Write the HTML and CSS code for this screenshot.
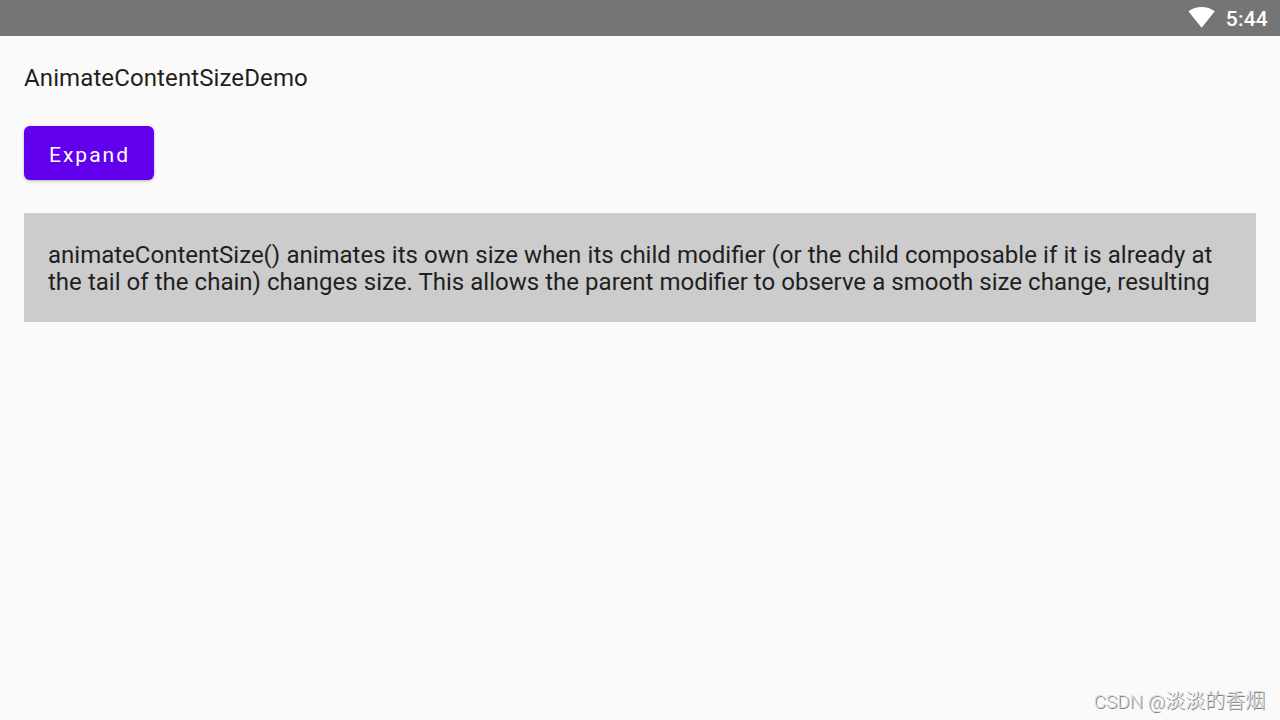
FILE: index.html
```html
<!DOCTYPE html>
<html lang="en">
<head>
  <meta charset="UTF-8">
  <meta name="viewport" content="width=device-width, initial-scale=1.0">
  <title>AnimateContentSizeDemo</title>
  <link rel="stylesheet" href="styles.css">
</head>
<body>
  <header class="status-bar">
    <svg class="wifi" viewBox="0 0 28 22" width="28" height="22">
      <path d="M13.6 21.8 L0.4 5.2 C8 -0.5 19.2 -0.5 26.8 5.2 Z" fill="#fff"/>
    </svg>
    <span class="clock">5:44</span>
  </header>

  <main class="content">
    <h1>AnimateContentSizeDemo</h1>
    <button class="expand-btn">Expand</button>
    <div class="text-box">
      <p class="first-line">animateContentSize() animates its own size when its child modifier (or the child composable if it is already at</p>
      <p>the tail of the chain) changes size. This allows the parent modifier to observe a smooth size change, resulting</p>
    </div>
  </main>

  <footer class="watermark"><span class="site">CSDN @</span>淡淡的香烟</footer>
</body>
</html>
```
FILE: styles.css
```css
body {
  margin: 0;
  height: 720px;
  display: flex;
  flex-direction: column;
  overflow: hidden;
  background: #fafafa;
  color: #1f1f1f;
  font-family: Roboto, sans-serif;
}

.status-bar {
  height: 36px;
  display: flex;
  justify-content: flex-end;
  box-sizing: border-box;
  padding: 6px 12px 0 0;
  background: #757575;
  color: #fff;
}

.clock {
  margin-left: 10px;
  font-size: 21px;
  font-weight: 500;
  line-height: 26px;
  letter-spacing: 0.2px;
}

.content {
  flex: 1;
  padding: 28px 24px 0;
}

h1 {
  margin: 0 0 34px;
  font-size: 24px;
  font-weight: 400;
  line-height: 28px;
  letter-spacing: 0.11px;
}

.expand-btn {
  display: block;
  width: 130px;
  height: 54px;
  margin-bottom: 33px;
  padding: 3px 0 0 1px;
  border: none;
  border-radius: 6px;
  background: #6200ee;
  box-shadow: 0 1px 3px rgba(0,0,0,0.3);
  color: #fff;
  font-family: inherit;
  font-size: 21px;
  letter-spacing: 2px;
}

.text-box {
  height: 109px;
  box-sizing: border-box;
  padding: 29px 24px 0;
  background: #ccc;
}

.text-box p {
  margin: 0;
  font-size: 24px;
  line-height: 27px;
  white-space: nowrap;
  word-spacing: 0.15px;
}

.text-box .first-line {
  word-spacing: 0.25px;
}

.watermark {
  padding: 0 15px 5px 0;
  color: #dcdcdc;
  font-family: Roboto, "Noto Sans CJK SC", sans-serif;
  font-size: 20px;
  font-weight: 300;
  line-height: 26px;
  text-align: right;
  text-shadow: 1px 1px 0 #808080;
}

.site {
  font-size: 19px;
}
```
